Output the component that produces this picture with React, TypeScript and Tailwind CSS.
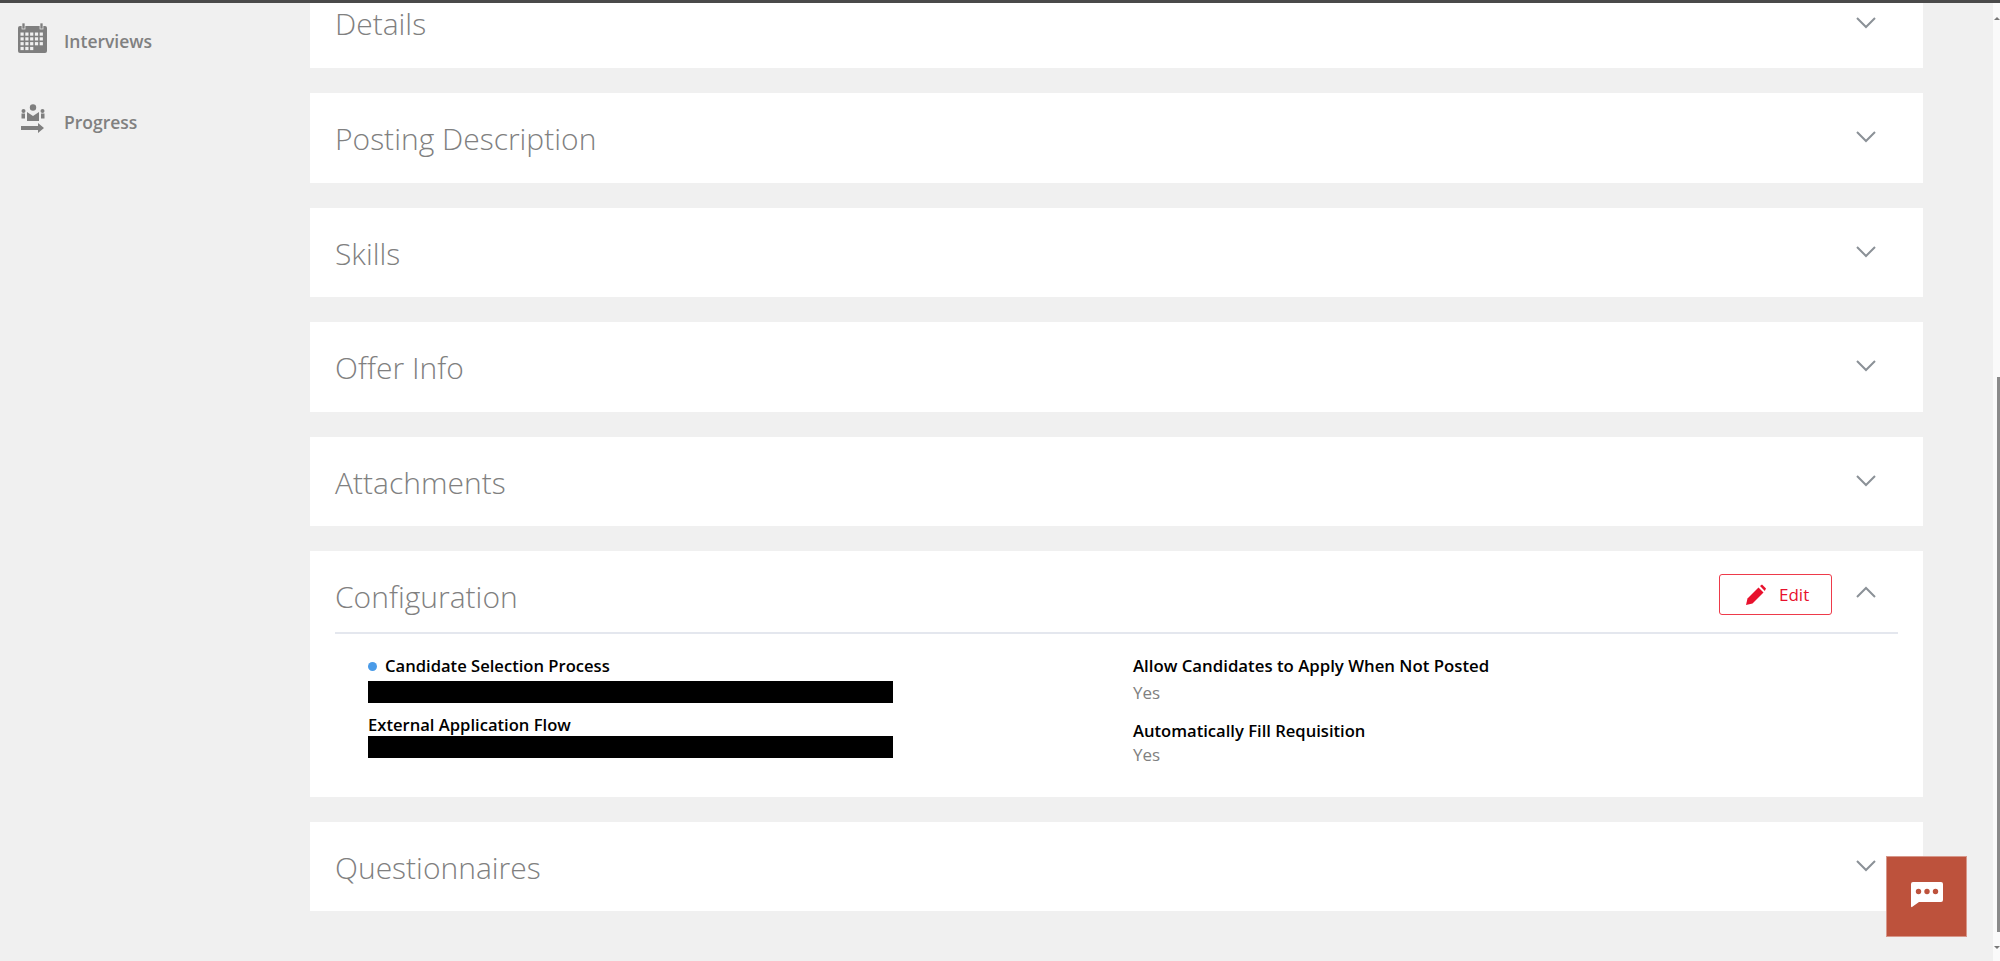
const font = { fontFamily: '"Segoe UI", "Open Sans", "Noto Sans", sans-serif' };

function Chevron({ up = false }: { up?: boolean }) {
  return (
    <svg width="22" height="14" viewBox="0 0 22 14" fill="none" stroke="#8b9197" strokeWidth="2">
      <path d={up ? "M2 12 L11 3 L20 12" : "M2 2 L11 11 L20 2"} />
    </svg>
  );
}

function CalendarIcon() {
  const cells = [];
  for (let r = 0; r < 4; r++) {
    for (let c = 0; c < 5; c++) {
      if (r === 3 && c > 2) continue;
      cells.push(<rect key={`${r}-${c}`} x={2.5 + c * 4.8} y={9.5 + r * 4.8} width="3.2" height="3.2" fill="#f0f0f0" />);
    }
  }
  return (
    <svg width="29" height="30" viewBox="0 0 29 30">
      <rect x="0" y="3" width="29" height="27" rx="2" fill="#7f7f7f" />
      <rect x="4" y="0" width="3" height="6" fill="#7f7f7f" stroke="#f0f0f0" strokeWidth="0.7" />
      <rect x="22" y="0" width="3" height="6" fill="#7f7f7f" stroke="#f0f0f0" strokeWidth="0.7" />
      {cells}
    </svg>
  );
}

function ProgressIcon() {
  return (
    <svg width="24" height="29" viewBox="0 0 24 29" fill="#7f7f7f">
      <circle cx="12" cy="3.5" r="3.2" />
      <path d="M6 8 L12 12 L18 8 L18 17 L6 17 Z" />
      <circle cx="2.5" cy="7" r="2" />
      <rect x="0.5" y="9.5" width="3.5" height="5" />
      <circle cx="21.5" cy="7" r="2" />
      <rect x="20" y="9.5" width="3.5" height="5" />
      <path d="M0 22 H17 V19 L23 24 L17 29 V26 H0 Z" />
    </svg>
  );
}

function Section({ title, last = false }: { title: string; last?: boolean }) {
  return (
    <div className={`bg-white px-[25px] flex items-start justify-between ${last ? "h-[89px]" : "h-[89.5px]"}`}>
      <div className="text-[30px] leading-[40px] font-light text-[#808080] mt-[26px]">{title}</div>
      <div className="mt-[37px] mr-[21px]">
        <Chevron />
      </div>
    </div>
  );
}

export default function App() {
  return (
    <div className="h-[961px] w-[2000px] overflow-hidden bg-[#f0f0f0] relative" style={font}>
      <div className="h-[3px] bg-[#4a4a4a]" />
      <div className="flex">
        <aside className="w-[310px] shrink-0 pl-[18px] pt-[20px]">
          <div className="flex items-start gap-[17px] h-[81px]">
            <CalendarIcon />
            <span className="text-[17.5px] leading-[24px] font-semibold text-[#808080] mt-[6px]">Interviews</span>
          </div>
          <div className="flex items-start gap-[19px] pl-[3px]">
            <ProgressIcon />
            <span className="text-[17.5px] leading-[24px] font-semibold text-[#808080] mt-[6px]">Progress</span>
          </div>
        </aside>
        <main className="w-[1613px] shrink-0 flex flex-col gap-[25px]">
          <div className="bg-white h-[65px] px-[25px] flex items-start justify-between">
            <div className="text-[30px] leading-[40px] font-light text-[#808080] mt-[1px]">Details</div>
            <div className="mt-[13px] mr-[21px]"><Chevron /></div>
          </div>
          <Section title="Posting Description" />
          <Section title="Skills" />
          <Section title="Offer Info" />
          <Section title="Attachments" />
          <div className="bg-white h-[246px] px-[25px]">
            <div className="h-[83px] border-b-2 border-[#e4e7ee] flex items-start justify-between">
              <div className="text-[30px] leading-[40px] font-light text-[#808080] mt-[26px]">Configuration</div>
              <div className="flex items-start mt-[23px] mr-[21px]">
                <div className="w-[113px] h-[41px] border border-[#ee3a4a] rounded-[3px] flex items-center pl-[25px] text-[#e8112d] text-[17px] font-medium">
                  <svg width="22" height="22" viewBox="0 0 22 22" fill="#e8112d">
                    <path d="M1 21 L2.5 14.5 L13.5 3.5 L18.5 8.5 L7.5 19.5 Z" />
                    <path d="M15 2 L17 0.5 L21 4.5 L19.8 7 Z" />
                  </svg>
                  <span className="ml-[12px]">Edit</span>
                </div>
                <div className="ml-[23px] mt-[11px]"><Chevron up /></div>
              </div>
            </div>
            <div className="flex pl-[33px] pt-[20px]">
              <div className="w-[765px]">
                <div className="flex items-center gap-[8px] text-[16.6px] leading-[24px] font-semibold text-black">
                  <span className="w-[9px] h-[9px] rounded-full bg-[#4a9be8]" />
                  Candidate Selection Process
                </div>
                <div className="w-[525px] h-[22px] bg-black mt-[3px]" />
                <div className="text-[16.6px] leading-[24px] font-semibold text-black mt-[10px] h-[23px]">External Application Flow</div>
                <div className="w-[525px] h-[22px] bg-black" />
              </div>
              <div>
                <div className="text-[16.8px] leading-[24px] font-semibold text-black">Allow Candidates to Apply When Not Posted</div>
                <div className="text-[17px] leading-[24px] text-[#808080] mt-[3px]">Yes</div>
                <div className="text-[16.6px] leading-[24px] font-semibold text-black mt-[14px]">Automatically Fill Requisition</div>
                <div className="text-[17px] leading-[24px] text-[#808080]">Yes</div>
              </div>
            </div>
          </div>
          <Section title="Questionnaires" last />
        </main>
      </div>

      <div className="absolute left-[1886px] top-[856px] w-[81px] h-[81px] bg-[#bd523c] border border-white/40 flex items-center justify-center">
        <svg className="mb-[3px]" width="32" height="26" viewBox="0 0 32 26">
          <path d="M2 0 H30 A2 2 0 0 1 32 2 V18 A2 2 0 0 1 30 20 H8 L1 25 Q0 25.5 0 24 V2 A2 2 0 0 1 2 0 Z" fill="#fff" />
          <circle cx="7.5" cy="9.5" r="2.7" fill="#bd523c" />
          <circle cx="16" cy="9.5" r="2.7" fill="#bd523c" />
          <circle cx="24.5" cy="9.5" r="2.7" fill="#bd523c" />
        </svg>
      </div>

      <div className="absolute right-0 top-[3px] bottom-0 w-[7px] bg-[#fafafa]">
        <div className="absolute right-0 top-[374px] h-[555px] w-[3px] bg-[#8a8a8a]" />
        <div className="absolute right-0 top-[14px] w-0 h-0 border-x-[3px] border-x-transparent border-b-[3px] border-b-[#777]" />
        <div className="absolute right-0 top-[943px] w-0 h-0 border-x-[3px] border-x-transparent border-t-[3px] border-t-[#777]" />
      </div>
    </div>
  );
}
